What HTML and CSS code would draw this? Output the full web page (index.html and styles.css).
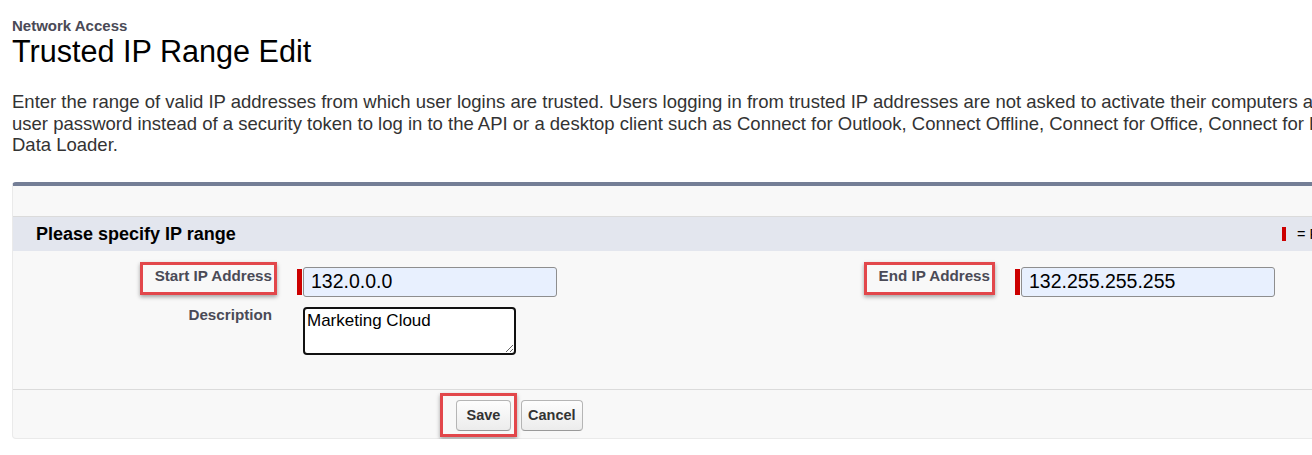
FILE: index.html
```html
<!DOCTYPE html>
<html lang="en">
<head>
    <meta charset="UTF-8">
    <title>Trusted IP Range Edit</title>
    <link rel="stylesheet" href="styles.css">
</head>
<body>

<div class="page">
    <div class="page-type">Network Access</div>
    <h1 class="page-title">Trusted IP Range Edit</h1>

    <p class="page-desc">Enter the range of valid IP addresses from which user logins are trusted. Users logging in from trusted IP addresses are not asked to activate their computers and can use their<br>user password instead of a security token to log in to the API or a desktop client such as Connect for Outlook, Connect Offline, Connect for Office, Connect for Lotus Notes, or the<br>Data Loader.</p>

    <form class="panel">
        <div class="panel-top"></div>

        <div class="section-head">
            <h3>Please specify IP range</h3>
            <div class="legend"><span class="req-mark"></span><span class="legend-text">= Required Information</span></div>
        </div>

        <div class="section-body">
            <div class="label-col"><span class="callout">Start IP Address</span></div>
            <div class="data-col"><span class="req-bar"></span><input class="field" type="text" value="132.0.0.0"></div>
            <div class="label-col"><span class="callout">End IP Address</span></div>
            <div class="data-col"><span class="req-bar"></span><input class="field" type="text" value="132.255.255.255"></div>

            <div class="label-col"><label>Description</label></div>
            <div class="data-col"><textarea class="desc">Marketing Cloud</textarea></div>
            <div></div>
            <div></div>
        </div>

        <div class="panel-bottom">
            <span class="callout callout-btn"><button class="btn btn-save" type="button">Save</button></span>
            <button class="btn" type="button">Cancel</button>
        </div>
    </form>
</div>

</body>
</html>
```

FILE: styles.css
```css
html, body {
    overflow: hidden;
}

body {
    margin: 0;
    background-color: #fff;
    color: #000;
    font-family: "Liberation Sans", Arial, sans-serif;
}

.page {
    width: 1500px;
    padding: 17px 12px 0;
}

.page-type {
    font-size: 15px;
    line-height: 17px;
    font-weight: bold;
    color: #4a4a56;
}

.page-title {
    margin: 0;
    font-size: 30.6px;
    line-height: 34px;
    font-weight: normal;
}

.page-desc {
    margin: 23px 0 0;
    font-size: 18.5px;
    line-height: 21.5px;
    color: #333;
    white-space: nowrap;
}

/* panel */
.panel {
    width: 1480px;
    margin-top: 26px;
    background-color: #f8f8f8;
    border: 1px solid #eaeaea;
    border-top: 4px solid #747e96;
    border-radius: 4px;
}

.panel-top {
    height: 30px;
    border-bottom: 1px solid #dbdbdb;
}

.section-head {
    display: flex;
    align-items: center;
    height: 34px;
    padding-left: 23px;
    background-color: #e3e6ee;
}

.section-head h3 {
    margin: 0;
    font-size: 18px;
    line-height: 34px;
    font-weight: bold;
}

.legend {
    display: flex;
    align-items: center;
    width: 199px;
    margin-left: auto;
    margin-right: 12px;
    font-size: 14.5px;
}

.req-mark {
    width: 4px;
    height: 14px;
    background-color: #c00;
}

.legend-text {
    margin-left: 11px;
    white-space: nowrap;
}

/* fields */
.section-body {
    display: grid;
    grid-template-columns: 272px 560px 158px 1fr;
    row-gap: 9px;
    padding: 16px 0 34px;
}

.label-col {
    padding-right: 13px;
    text-align: right;
    font-size: 15.2px;
    line-height: 18px;
    font-weight: bold;
    color: #4a4a56;
}

.data-col {
    display: flex;
    align-items: flex-start;
    padding-left: 12px;
}

.req-bar {
    width: 5px;
    height: 26px;
    margin: 2px 1px 0 0;
    background-color: #c00;
}

.field {
    box-sizing: border-box;
    width: 254px;
    height: 30px;
    margin: 0;
    padding: 0 7px;
    border: 1px solid #8e8e8e;
    border-radius: 3px;
    background-color: #e8f0fe;
    font-family: "Liberation Sans", Arial, sans-serif;
    font-size: 19.5px;
    color: #000;
}

.desc {
    box-sizing: border-box;
    width: 213px;
    height: 48px;
    margin: 1px 0 0 6px;
    padding: 2px;
    border: 2px solid #111;
    border-radius: 4px;
    background-color: #fff;
    font-family: "Liberation Sans", Arial, sans-serif;
    font-size: 17px;
    line-height: 19px;
    color: #000;
    outline: none;
}

/* buttons */
.panel-bottom {
    display: flex;
    gap: 10px;
    padding: 10px 0 7px 443px;
    border-top: 1px solid #dbdbdb;
}

.btn {
    height: 31px;
    margin: 0;
    padding: 0 6px;
    border: 1px solid #b5b5b5;
    border-bottom-color: #9a9a9a;
    border-radius: 4px;
    background: linear-gradient(#fdfdfd, #ececec);
    font-family: "Liberation Sans", Arial, sans-serif;
    font-size: 14.5px;
    font-weight: bold;
    color: #333;
}

.btn-save {
    min-width: 55px;
}

/* red annotation boxes */
.callout {
    position: relative;
    display: inline-block;
}

.callout::after {
    content: "";
    position: absolute;
    top: -5px;
    bottom: -10px;
    left: -15px;
    right: -5px;
    border: 3px solid #e2474b;
    box-shadow: 0 2px 4px rgba(0, 0, 0, 0.35);
    pointer-events: none;
}

.callout-btn::after {
    top: -7px;
    bottom: -6px;
    left: -16px;
    right: -6px;
}
```
